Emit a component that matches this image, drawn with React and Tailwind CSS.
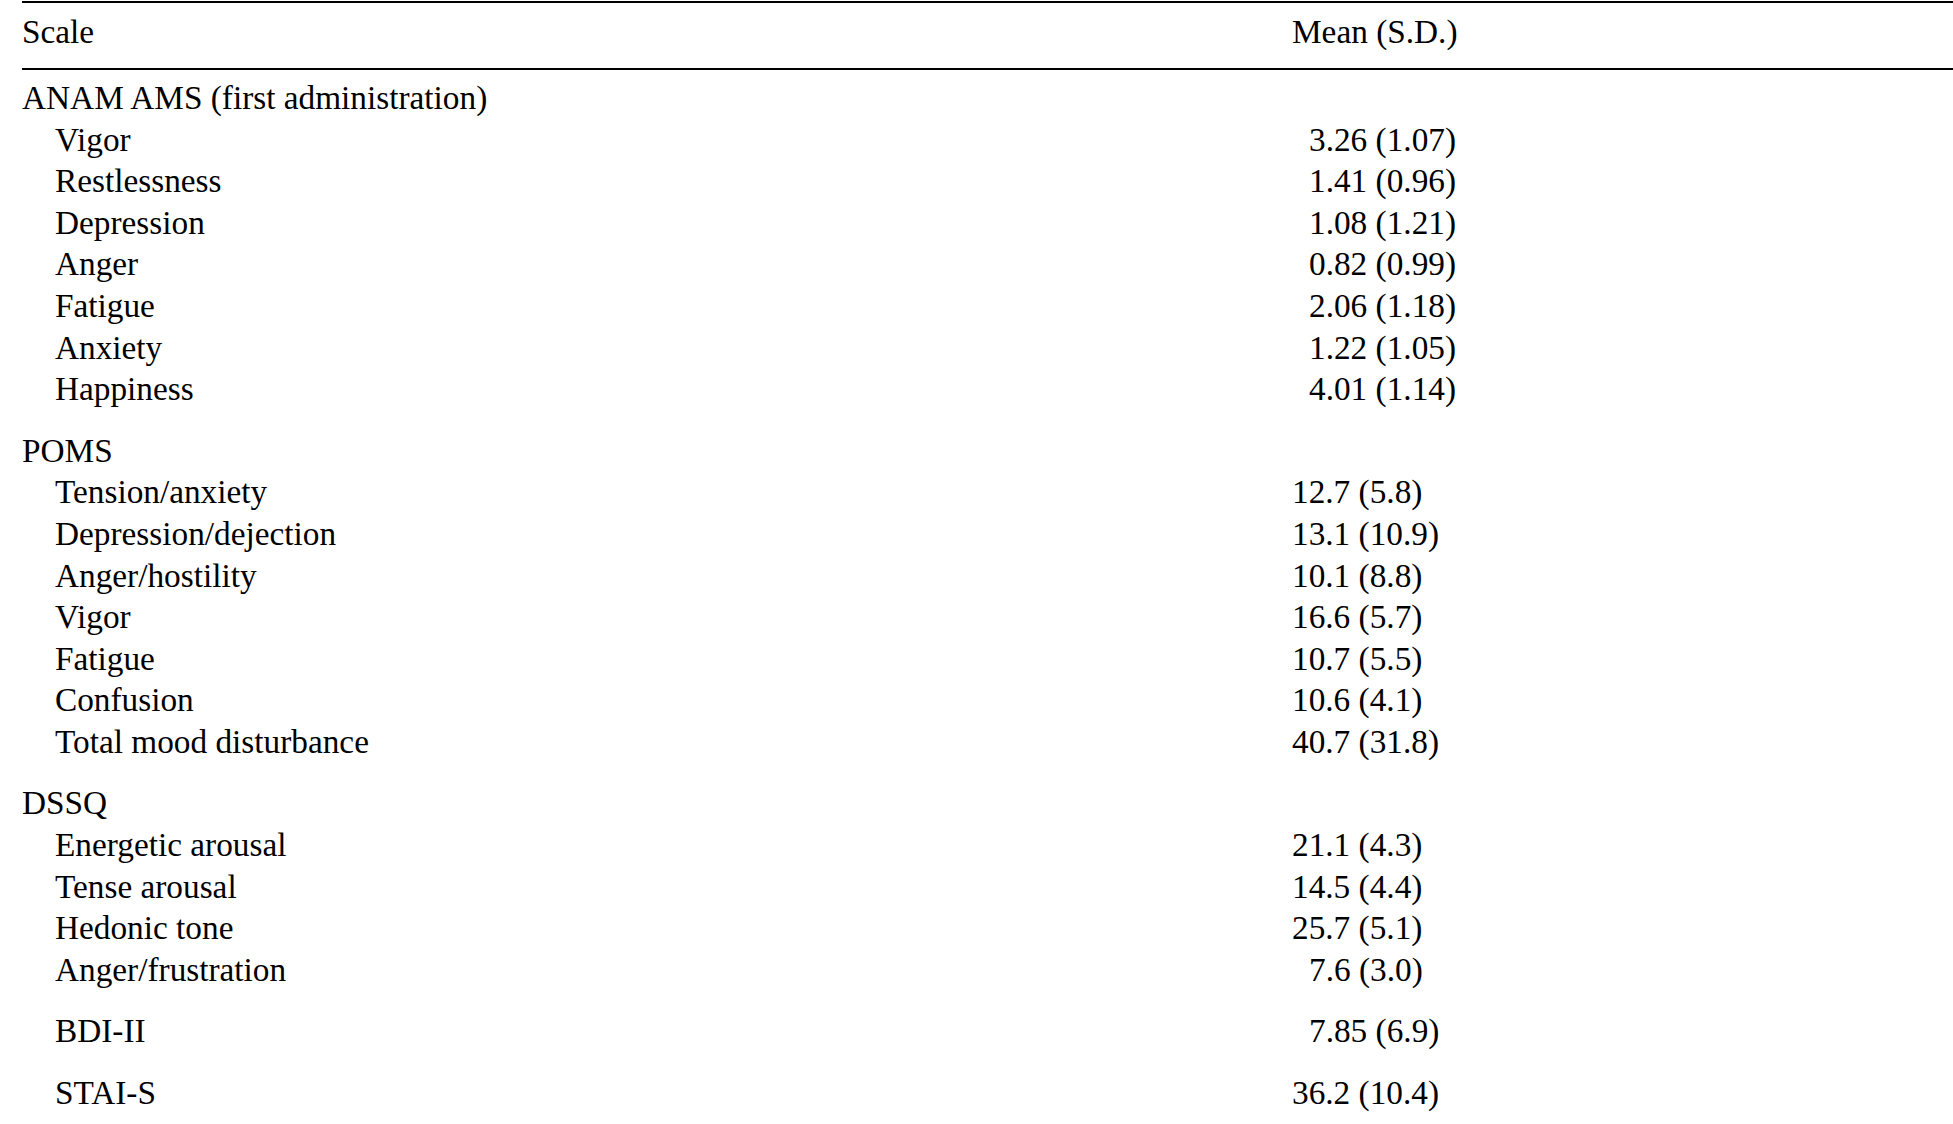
import React from "react";

const groups = [
  {
    title: "ANAM AMS (first administration)",
    rows: [
      ["Vigor", "3.26 (1.07)", true],
      ["Restlessness", "1.41 (0.96)", true],
      ["Depression", "1.08 (1.21)", true],
      ["Anger", "0.82 (0.99)", true],
      ["Fatigue", "2.06 (1.18)", true],
      ["Anxiety", "1.22 (1.05)", true],
      ["Happiness", "4.01 (1.14)", true],
    ],
  },
  {
    title: "POMS",
    rows: [
      ["Tension/anxiety", "12.7 (5.8)"],
      ["Depression/dejection", "13.1 (10.9)"],
      ["Anger/hostility", "10.1 (8.8)"],
      ["Vigor", "16.6 (5.7)"],
      ["Fatigue", "10.7 (5.5)"],
      ["Confusion", "10.6 (4.1)"],
      ["Total mood disturbance", "40.7 (31.8)"],
    ],
  },
  {
    title: "DSSQ",
    rows: [
      ["Energetic arousal", "21.1 (4.3)"],
      ["Tense arousal", "14.5 (4.4)"],
      ["Hedonic tone", "25.7 (5.1)"],
      ["Anger/frustration", "7.6 (3.0)", true],
    ],
  },
  { rows: [["BDI-II", "7.85 (6.9)", true]] },
  { rows: [["STAI-S", "36.2 (10.4)"]] },
];

const Row = ({ label, value, pad, indent }) => (
  <div className="flex leading-[41.6px]">
    <div className={`w-[1270px] shrink-0 ${indent ? "pl-[33px]" : ""}`}>{label}</div>
    <div className={pad ? "pl-[17px]" : ""}>{value}</div>
  </div>
);

export default function App() {
  return (
    <div
      className="w-[1953px] h-[1124px] bg-white text-black text-[33.3px] overflow-hidden"
      style={{ fontFamily: '"Liberation Serif", "Times New Roman", serif' }}
    >
      <div className="ml-[22px] mt-[1px] border-t-2 border-black">
        {/* header */}
        <div className="pt-[8px] pb-[15.4px] border-b-2 border-black">
          <Row label="Scale" value="Mean (S.D.)" />
        </div>

        {/* body */}
        <div className="pt-[7px]">
          {groups.map((g, i) => (
            <div key={i} className={i > 0 ? "mt-[20px]" : ""}>
              {g.title && <Row label={g.title} value="" />}
              {g.rows.map(([label, value, pad]) => (
                <Row key={label + value} label={label} value={value} pad={pad} indent />
              ))}
            </div>
          ))}
        </div>
      </div>
    </div>
  );
}
